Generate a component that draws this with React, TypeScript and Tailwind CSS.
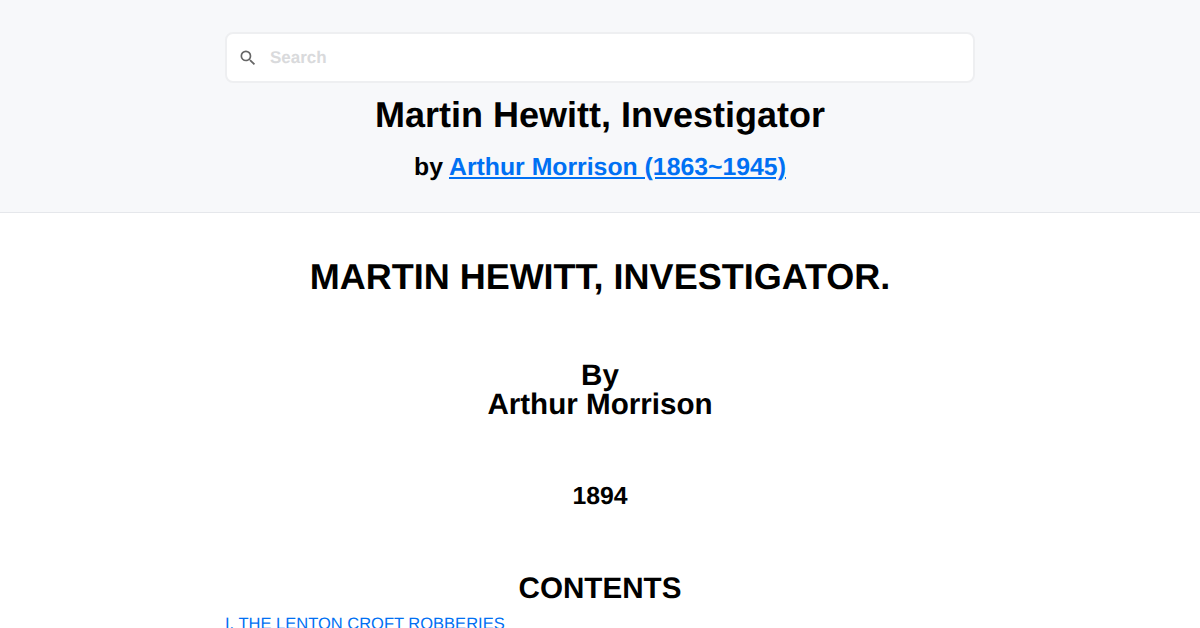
import React from "react";

export default function App() {
  return (
    <div className="h-[628px] overflow-hidden bg-white text-black font-['Liberation_Sans',Arial,sans-serif] [text-rendering:geometricPrecision] antialiased">
      <header className="h-[213px] bg-[#f7f8fa] border-b border-[#e5e7eb] pt-[32px]">
        <div className="w-[750px] mx-auto">
          <div className="h-[51px] bg-white border-2 border-[#eeeff1] rounded-[8px] flex items-center pl-[11px]">
            <svg width="20" height="20" viewBox="0 0 24 24" fill="#666">
              <path d="M15.5 14h-.79l-.28-.27A6.47 6.47 0 0 0 16 9.5 6.5 6.5 0 1 0 9.5 16c1.61 0 3.09-.59 4.23-1.57l.27.28v.79l5 4.99L20.49 19l-4.99-5zm-6 0C7.01 14 5 11.99 5 9.5S7.01 5 9.5 5 14 7.01 14 9.5 11.99 14 9.5 14z" />
            </svg>
            <span className="ml-[12px] text-[17px] font-bold text-[#d9dadc]">Search</span>
          </div>
          <h1 className="text-center text-[36px] leading-[44px] font-bold mt-[10px]">Martin Hewitt, Investigator</h1>
          <p className="text-center text-[24.8px] leading-[32px] font-bold mt-[15px]">
            by <a className="text-[#0070f3] underline">Arthur Morrison (1863~1945)</a>
          </p>
        </div>
      </header>
      <main className="w-[750px] mx-auto">
        <h2 className="text-center text-[36px] leading-[44px] font-bold mt-[42px]">MARTIN HEWITT, INVESTIGATOR.</h2>
        <h3 className="text-center text-[29.6px] leading-[29px] font-bold mt-[62px]">By<br />Arthur Morrison</h3>
        <h4 className="text-center text-[24.8px] leading-[32px] font-bold mt-[62px]">1894</h4>
        <h3 className="text-center text-[29.6px] leading-[36px] font-bold mt-[58px]">CONTENTS</h3>
        <a className="block text-[16.5px] leading-[26px] text-[#0070f3] mt-[4px] whitespace-nowrap">I. THE LENTON CROFT ROBBERIES</a>
      </main>
    </div>
  );
}
